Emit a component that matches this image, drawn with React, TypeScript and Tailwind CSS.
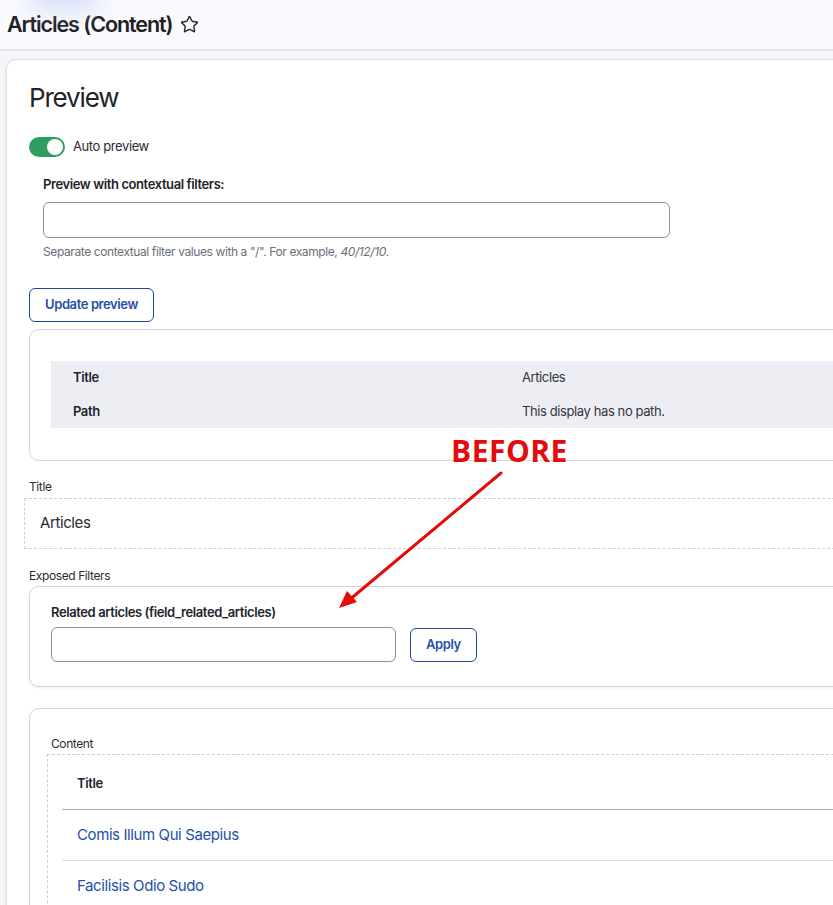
import { Star } from 'lucide-react';

function Toggle() {
  return (
    <div className="flex h-5 w-9 items-center justify-end rounded-full bg-[#2e9e5f] px-[2px]">
      <div className="h-4 w-4 rounded-full bg-white" />
    </div>
  );
}

function Annotation() {
  return (
    <>
      <div className="absolute left-[451px] top-[431px] text-[30px] font-bold leading-[40px] tracking-[0.5px] text-[#e30b0b] [font-family:'Open_Sans',sans-serif]">
        BEFORE
      </div>
      <svg
        className="absolute left-[330px] top-[465px]"
        width="180"
        height="155"
        viewBox="0 0 180 155"
      >
        <line x1="171" y1="8" x2="18" y2="136" stroke="#e30b0b" strokeWidth="3" strokeLinecap="round" />
        <polygon points="9,143 17,126 27,137" fill="#e30b0b" />
      </svg>
    </>
  );
}

export default function App() {
  return (
    <div className="relative h-[905px] w-[833px] overflow-hidden bg-[#f4f6f9] tracking-[-0.025em] text-[#232429] [font-family:Inter,sans-serif]">
      {/* faint focus glow top left */}
      <div className="absolute left-[30px] top-[-14px] h-[20px] w-[70px] rounded-full bg-[#c9d4f5] blur-md" />

      {/* Page header */}
      <div className="flex h-[51px] items-center gap-[7px] border-b-2 border-[#e4e7eb] bg-[#f8fafd] pl-[7px]">
        <h1 className="text-[21.5px] font-semibold tracking-[-0.05em] text-[#1f2024]">Articles (Content)</h1>
        <Star className="h-[19px] w-[19px] text-[#2a2b30]" strokeWidth={1.8} />
      </div>

      {/* Main card */}
      <div className="ml-[6px] mt-[8px] w-[900px] rounded-tl-[10px] border border-[#dfe0e4] bg-white pl-[22px] pt-[22px] shadow-sm">
        <h2 className="text-[26px] font-normal leading-[32px] tracking-[-0.045em] text-[#232429]">Preview</h2>

        <div className="mt-[23px] flex items-center gap-2">
          <Toggle />
          <span className="text-[13px] text-[#2a2b30]">Auto preview</span>
        </div>

        <div className="ml-[14px] mt-[18px]">
          <label className="block text-[13px] font-semibold text-[#232429]">Preview with contextual filters:</label>
          <div className="mt-[7px] h-[36px] w-[627px] rounded-[6px] border border-[#8e929c] bg-white" />
          <p className="mt-[5px] text-[12px] text-[#6b6e78]">
            Separate contextual filter values with a "/". For example, <em>40/12/10</em>.
          </p>
        </div>

        <button className="mt-[27px] h-[34px] rounded-[6px] border border-[#21469b] px-[15px] text-[13px] font-semibold text-[#2450a8]">
          Update preview
        </button>

        {/* Preview info box */}
        <div className="mt-[7px] rounded-l-[10px] border border-[#d4d5da] pb-[32px] pl-[21px] pt-[31px]">
          <div className="bg-[#eceef4] text-[13px]">
            <div className="flex h-[33px] items-center pt-[1px]">
              <span className="w-[471px] pl-[22px] font-semibold text-[#222330]">Title</span>
              <span className="text-[#33343b]">Articles</span>
            </div>
            <div className="flex h-[34px] items-center pt-[2px]">
              <span className="w-[471px] pl-[22px] font-semibold text-[#222330]">Path</span>
              <span className="text-[#33343b]">This display has no path.</span>
            </div>
          </div>
        </div>

        {/* Title area */}
        <div className="mt-[17px] text-[12px] text-[#2a2b30]">Title</div>
        <div className="ml-[-5px] mt-[2px] flex h-[51px] items-center border border-dashed border-[#cfd0d4] pl-[15px] text-[15px] text-[#2a2b30]">
          Articles
        </div>

        {/* Exposed filters */}
        <div className="mt-[18px] text-[12px] text-[#2a2b30]">Exposed Filters</div>
        <div className="mt-[1px] rounded-l-[10px] border border-[#d4d5da] pb-[24px] pl-[21px] pt-[16px] shadow-[0_1px_3px_rgba(0,0,0,0.08)]">
          <label className="block text-[13px] font-semibold text-[#232429]">Related articles (field_related_articles)</label>
          <div className="mt-[5px] flex items-center gap-[14px]">
            <div className="h-[35px] w-[345px] rounded-[6px] border border-[#8e929c] bg-white" />
            <button className="h-[34px] rounded-[6px] border border-[#21469b] px-[15px] text-[13px] font-semibold text-[#2450a8]">
              Apply
            </button>
          </div>
        </div>

        {/* Content */}
        <div className="mt-[21px] rounded-tl-[10px] border border-[#d4d5da] pl-[21px] pt-[26px]">
          <div className="text-[12px] text-[#2a2b30]">Content</div>
          <div className="ml-[-4px] mt-[1px] h-[200px] border-l border-t border-dashed border-[#cfd0d4] pl-[14px] pt-[17px]">
            <div className="flex h-[38px] items-start border-b border-[#a9abb2] pl-[15px] pt-[2px] text-[13px] font-semibold text-[#222330]">
              Title
            </div>
            <div className="flex h-[51px] items-center border-b border-[#dfe0e4] pl-[15px] text-[15px] text-[#2450a8]">
              Comis Illum Qui Saepius
            </div>
            <div className="flex h-[51px] items-center pl-[15px] text-[15px] text-[#2450a8]">Facilisis Odio Sudo</div>
          </div>
        </div>
      </div>

      <Annotation />
    </div>
  );
}
